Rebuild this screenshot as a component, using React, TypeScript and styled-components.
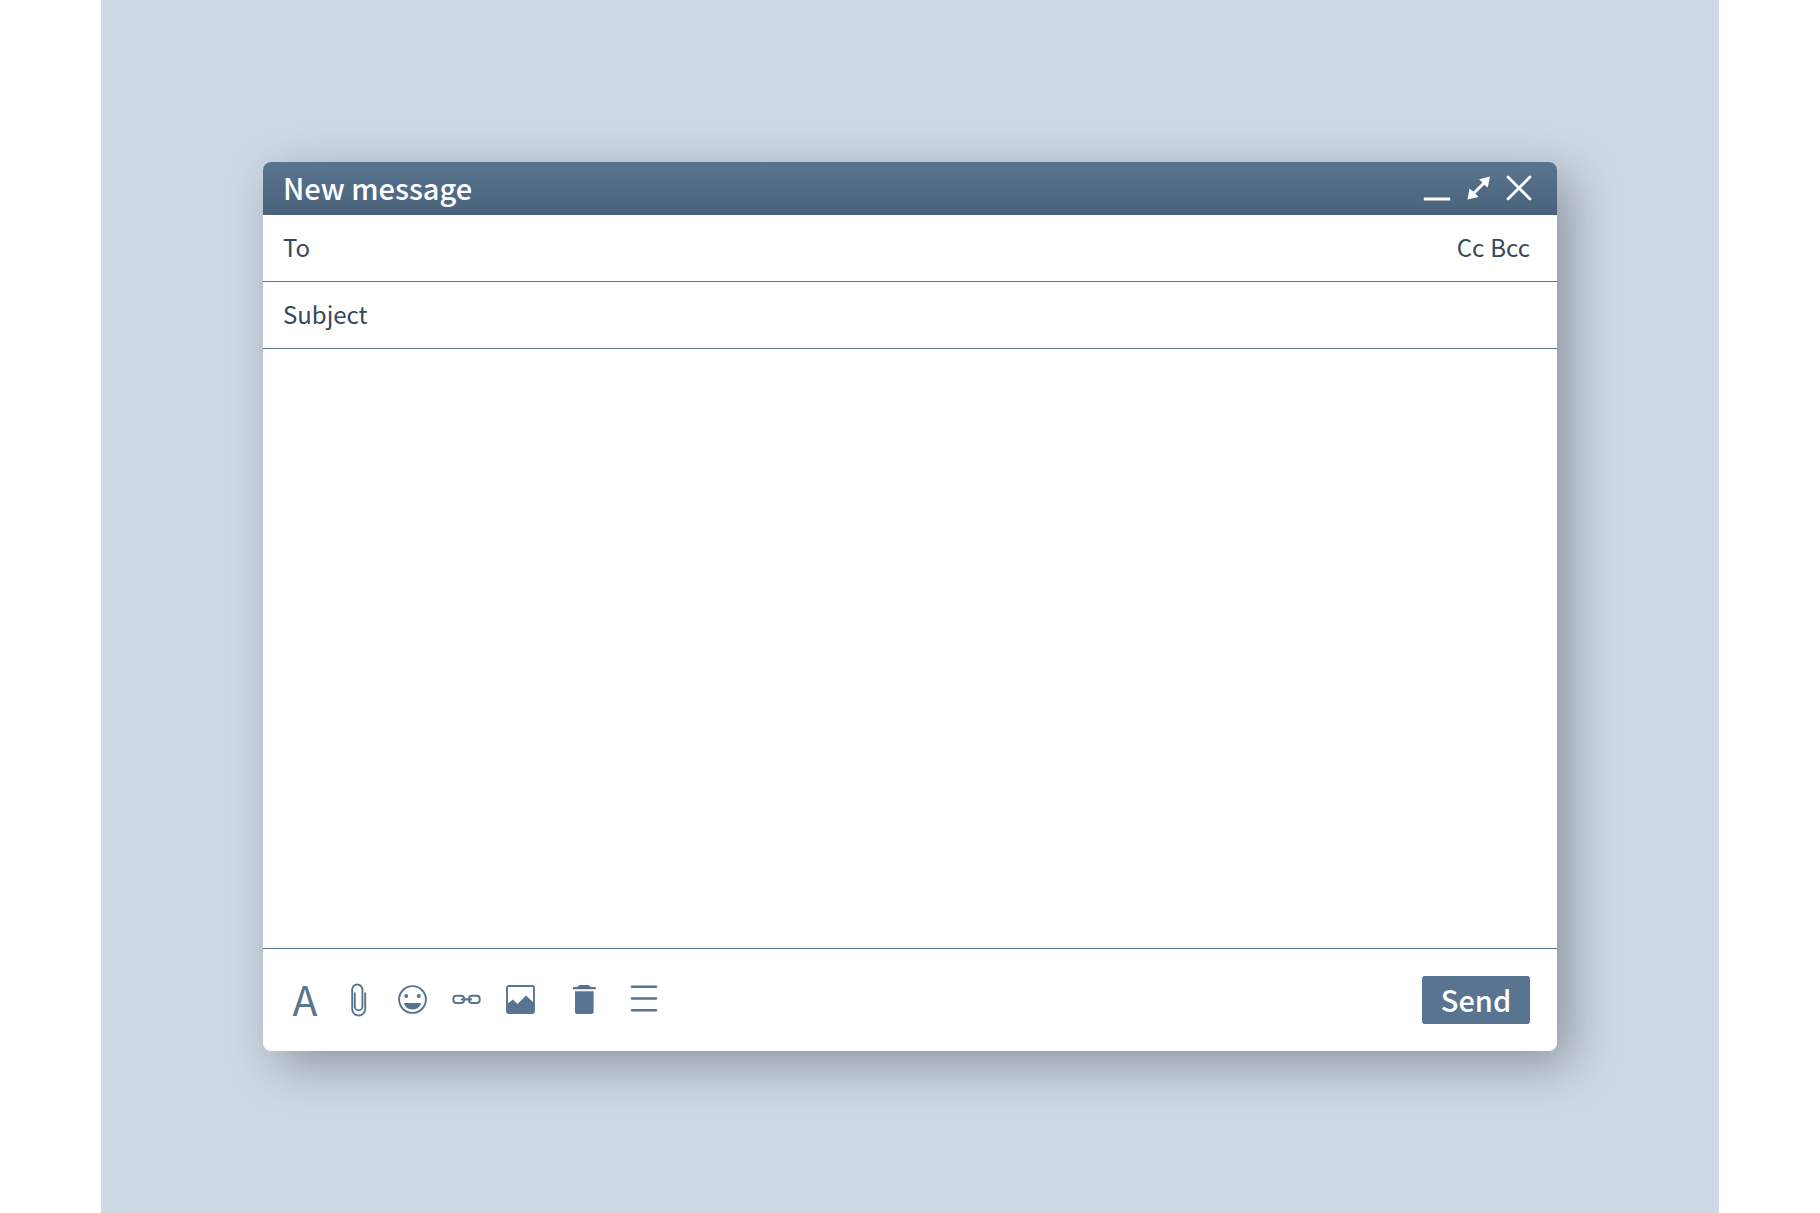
import React from "react";
import styled, { createGlobalStyle } from "styled-components";

const colors = {
  backdrop: "#cfd9e5",
  accent: "#587490",
  barTop: "#587590",
  barBottom: "#4a627a",
  text: "#34495c",
  paper: "#ffffff",
};

const GlobalStyle = createGlobalStyle`
  *, *::before, *::after { box-sizing: border-box; }
  body {
    margin: 0;
    background: ${colors.paper};
    color: ${colors.text};
    font-family: "Noto Sans CJK SC", "Noto Sans", sans-serif;
  }
  button, input, textarea { font: inherit; color: inherit; }
`;

const Backdrop = styled.main`
  display: flex;
  min-height: 100vh;
  margin: 0 101px;
  padding: 162px;
  background: ${colors.backdrop};
`;

const Window = styled.form`
  display: flex;
  flex: 1;
  flex-direction: column;
  min-width: 0;
  overflow: hidden;
  border-radius: 8px;
  background: ${colors.paper};
  box-shadow: 14px 14px 50px rgba(25, 28, 32, 0.36);
`;

const TitleBar = styled.header`
  display: flex;
  align-items: center;
  justify-content: space-between;
  height: 53px;
  padding: 0 24px 2px 20px;
  background: linear-gradient(${colors.barTop}, ${colors.barBottom});
  color: ${colors.paper};
`;

const Title = styled.h1`
  margin: 0;
  padding-bottom: 2px;
  font-size: 29px;
  font-weight: 500;
  line-height: 48px;
`;

const Group = styled.div<{ $gap: number }>`
  display: flex;
  align-items: center;
  gap: ${({ $gap }) => $gap}px;
`;

const IconButton = styled.button<{ $size: number }>`
  display: flex;
  align-items: center;
  justify-content: center;
  width: ${({ $size }) => $size}px;
  height: ${({ $size }) => $size}px;
  padding: 0;
  border: 0;
  background: none;
  cursor: pointer;

  svg {
    display: block;
    flex: none;
  }
`;

const LetterButton = styled(IconButton)`
  padding-bottom: 4px;
  font-size: 41px;
  line-height: 32px;
`;

const FieldRow = styled.div`
  display: flex;
  align-items: center;
  gap: 12px;
  height: 67px;
  padding: 0 27px 2px 20px;
  border-bottom: 1px solid ${colors.accent};
  font-size: 24px;
  line-height: 32px;
`;

const FieldInput = styled.input`
  flex: 1;
  min-width: 0;
  padding: 0;
  border: 0;
  outline: 0;
  background: none;
`;

const CopyButton = styled.button`
  padding: 0;
  border: 0;
  background: none;
  cursor: pointer;
`;

const Body = styled.textarea`
  flex: 1;
  min-height: 160px;
  padding: 20px;
  border: 0;
  outline: 0;
  resize: none;
  background: none;
  font-size: 24px;
`;

const Footer = styled.footer`
  display: flex;
  align-items: center;
  justify-content: space-between;
  height: 103px;
  padding: 0 27px 0 26px;
  border-top: 1px solid ${colors.accent};
  color: ${colors.accent};
`;

const SendButton = styled.button`
  width: 108px;
  height: 48px;
  padding: 0 0 2px;
  border: 0;
  border-radius: 3px;
  background: ${colors.accent};
  color: ${colors.paper};
  font-size: 29px;
  font-weight: 500;
  line-height: 44px;
  cursor: pointer;
`;

const MinimizeIcon = () => (
  <svg width="28" height="28" viewBox="0 0 28 28" aria-hidden="true">
    <path d="M.8 25h26.400" stroke="currentColor" strokeWidth="3" />
  </svg>
);

const ExpandIcon = () => (
  <svg width="28" height="28" viewBox="0 0 28 28" aria-hidden="true">
    <path d="M8.500 20.500 21 8" stroke="currentColor" strokeWidth="2.800" />
    <path
      d="M26 2.500 23.800 13.600 20.600 10.900 18 8.300 15.200 5.200zM3.500 25.500 5.500 14.500 8.800 17.200 11.500 19.800 14.600 23z"
      fill="currentColor"
    />
  </svg>
);

const CloseIcon = () => (
  <svg width="28" height="28" viewBox="0 0 28 28" aria-hidden="true">
    <path d="M3 3 25 25M25 3 3 25" stroke="currentColor" strokeWidth="2.800" strokeLinecap="round" />
  </svg>
);

const ClipIcon = () => (
  <svg width="32" height="34" viewBox="0 0 32 34" fill="none" aria-hidden="true">
    <path
      d="M11.800 9.500v14a3.800 3.800 0 0 0 7.600 0V6.600a4.800 4.800 0 0 0-10.200 0V26a6.500 6.500 0 0 0 13 0V9.500"
      stroke="currentColor"
      strokeWidth="1.900"
    />
  </svg>
);

const SmileIcon = () => (
  <svg width="32" height="32" viewBox="0 0 32 32" aria-hidden="true">
    <circle cx="15.500" cy="15.500" r="13.400" fill="none" stroke="currentColor" strokeWidth="1.900" />
    <circle cx="9.200" cy="12" r="2" fill="currentColor" />
    <circle cx="21.800" cy="12" r="2" fill="currentColor" />
    <path d="M6.900 19h17.200c-.8 4-4.400 6.400-8.600 6.400s-7.800-2.400-8.600-6.400z" fill="currentColor" />
  </svg>
);

const ChainIcon = () => (
  <svg width="32" height="32" viewBox="0 0 32 32" fill="none" stroke="currentColor" aria-hidden="true">
    <rect x="2.400" y="11.800" width="10.700" height="7.200" rx="3" strokeWidth="2" />
    <rect x="18" y="11.800" width="10.700" height="7.200" rx="3" strokeWidth="2" />
    <path d="M11 15.400h9" strokeWidth="2.200" strokeLinecap="round" />
  </svg>
);

const PictureIcon = () => (
  <svg width="32" height="32" viewBox="0 0 32 32" aria-hidden="true">
    <rect x="2" y="2" width="27" height="27" rx="2" fill="none" stroke="currentColor" strokeWidth="1.900" />
    <path d="M2 20 8 15.500l4.500 4.500 8.500-8.500 8 7.500V27.500a1.500 1.500 0 0 1-1.500 1.500H3.500a1.500 1.500 0 0 1-1.500-1.500z" fill="currentColor" />
  </svg>
);

const TrashIcon = () => (
  <svg width="32" height="32" viewBox="0 0 32 32" aria-hidden="true">
    <path
      d="M5 3h4l2.500-2h9L23 3h4.700v2.300H5zM7 7.300h18.600V28a2 2 0 0 1-2 2H9a2 2 0 0 1-2-2z"
      fill="currentColor"
    />
  </svg>
);

const LinesIcon = () => (
  <svg width="32" height="32" viewBox="0 0 32 32" aria-hidden="true">
    <path
      d="M4 2.700h24M4 14.500h24M4 26.200h24"
      stroke="currentColor"
      strokeWidth="2.600"
      strokeLinecap="round"
    />
  </svg>
);

export default function App() {
  return (
    <>
      <GlobalStyle />
      <Backdrop>
        <Window onSubmit={(event: React.FormEvent) => event.preventDefault()}>
          <TitleBar>
            <Title>New message</Title>
            <Group $gap={13}>
              <IconButton $size={28} type="button" aria-label="Minimize"><MinimizeIcon /></IconButton>
              <IconButton $size={28} type="button" aria-label="Expand"><ExpandIcon /></IconButton>
              <IconButton $size={28} type="button" aria-label="Close"><CloseIcon /></IconButton>
            </Group>
          </TitleBar>
          <FieldRow>
            <label htmlFor="to">To</label>
            <FieldInput id="to" type="text" />
            <Group $gap={6}>
              <CopyButton type="button">Cc</CopyButton>
              <CopyButton type="button">Bcc</CopyButton>
            </Group>
          </FieldRow>
          <FieldRow>
            <label htmlFor="subject">Subject</label>
            <FieldInput id="subject" type="text" />
          </FieldRow>
          <Body aria-label="Message" />
          <Footer>
            <Group $gap={31}>
              <Group $gap={22}>
                <LetterButton $size={32} type="button" aria-label="Text style">A</LetterButton>
                <IconButton $size={32} type="button" aria-label="Attach file"><ClipIcon /></IconButton>
                <IconButton $size={32} type="button" aria-label="Insert emoji"><SmileIcon /></IconButton>
                <IconButton $size={32} type="button" aria-label="Insert link"><ChainIcon /></IconButton>
                <IconButton $size={32} type="button" aria-label="Insert picture"><PictureIcon /></IconButton>
              </Group>
              <Group $gap={28}>
                <IconButton $size={32} type="button" aria-label="Delete"><TrashIcon /></IconButton>
                <IconButton $size={32} type="button" aria-label="More options"><LinesIcon /></IconButton>
              </Group>
            </Group>
            <SendButton type="submit">Send</SendButton>
          </Footer>
        </Window>
      </Backdrop>
    </>
  );
}
